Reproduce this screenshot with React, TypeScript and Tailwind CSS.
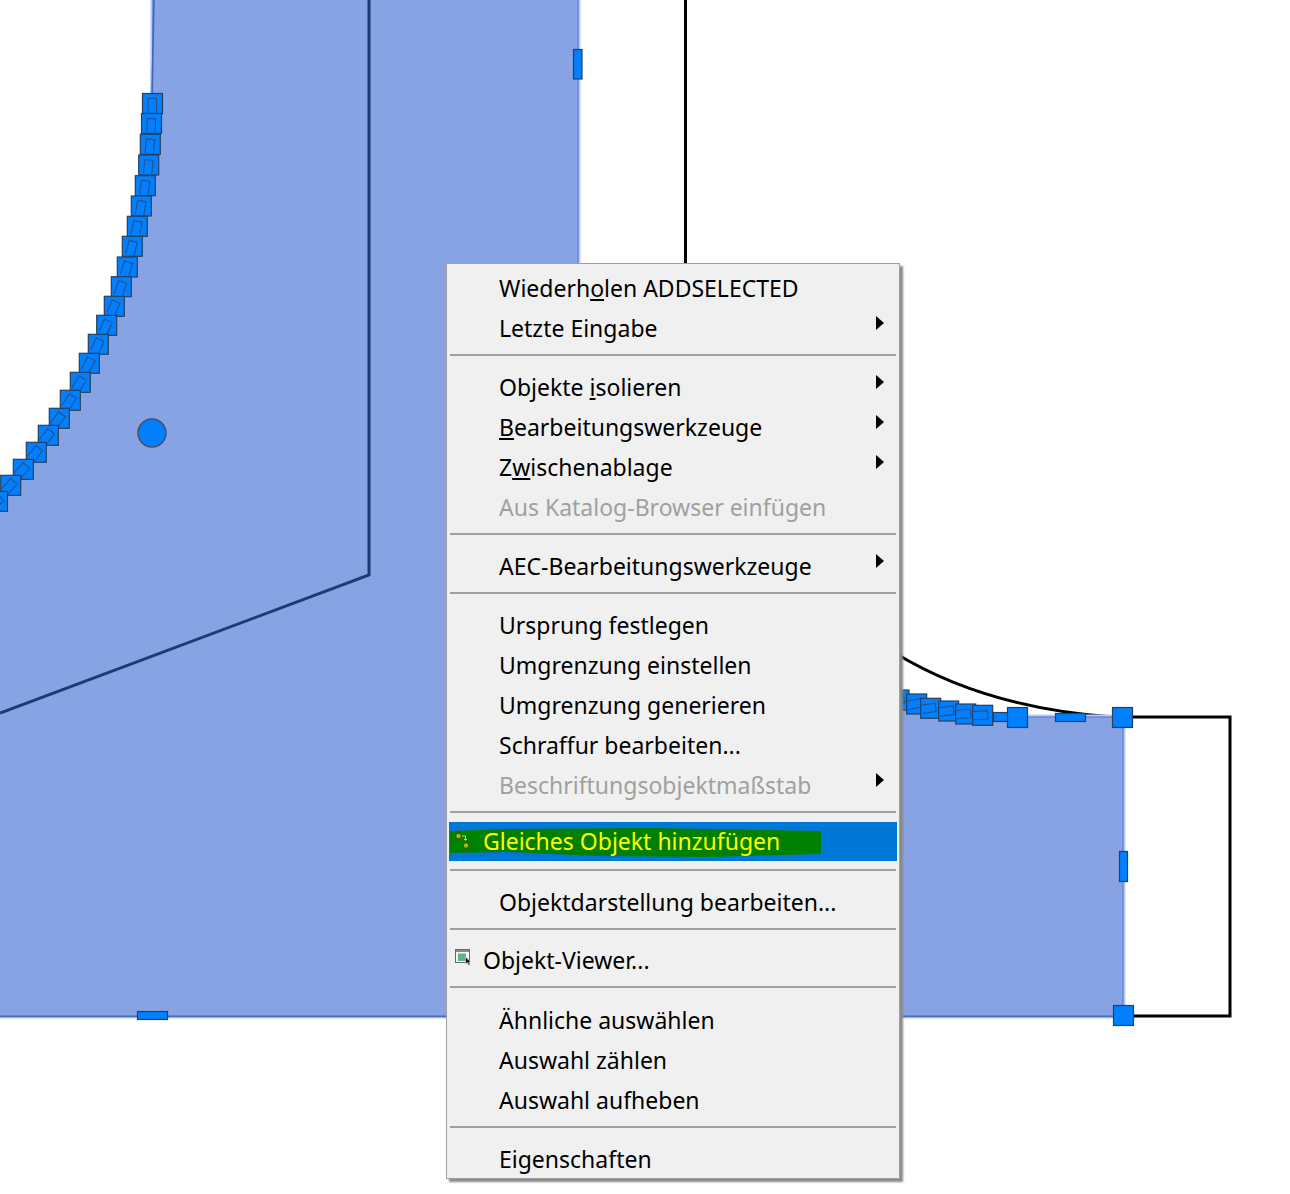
import React from 'react';

// handle centres along the arc, top to bottom
const arcLeft: [number, number][] = [
  [152.5, 103.5], [151.5, 123.5], [150.3, 144.3], [148.7, 165], [145.3, 185.7], [141.3, 206],
  [137.3, 226.3], [132.3, 246.3], [127.3, 267], [121.3, 286.7], [114.3, 306.3], [106.7, 325.3],
  [98.3, 344.3], [89.3, 363.3], [80.3, 382.3], [70.3, 400.3], [59.3, 418.3], [48.3, 435.3],
  [36.3, 452.3], [23.3, 469.3], [10.7, 485.3], [-2.5, 501.3],
];
const arcRight: [number, number, number][] = [
  [899, 700, 78], [916.7, 704, 80], [930.7, 708.3, 82], [948.7, 711, 83], [965.7, 714, 85], [982.7, 715.3, 87],
];

const Handle = ({ x, y, angle }: { x: number; y: number; angle: number }) => (
  <g transform={`translate(${x} ${y})`}>
    <rect x={-10} y={-10} width={20} height={20} fill="#0080ff" stroke="#27405f" strokeWidth={1.2} />
    <path
      d="M-4.5 9 L-4.5 -5 L4 -5 L4 9"
      transform={`rotate(${angle})`}
      fill="none"
      stroke="#27528f"
      strokeWidth={1.2}
    />
  </g>
);

const Drawing = () => {
  const leftPts = arcLeft.map(([x, y]) => `${x},${y}`).join(' L');
  const rightPts = arcRight.map(([x, y]) => `${x},${y}`).join(' L');
  const shape = `M153,-5 L578,-5 L578,690 L${rightPts} L1017,717 L1123,717 L1123,1016 L-5,1016 L${[...arcLeft]
    .reverse()
    .map(([x, y]) => `${x},${y}`)
    .join(' L')} Z`;
  void leftPts;

  return (
    <svg className="absolute inset-0" width={1290} height={1194} viewBox="0 0 1290 1194">
      {/* black outline */}
      <path d="M685.5 0 V270" fill="none" stroke="#000" strokeWidth={3} />
      <path d="M895 653 Q985 708 1113 717 H1230 V1016 H1120" fill="none" stroke="#000" strokeWidth={3} />

      {/* selected hatch */}
      <path d={shape} fill="#b9cbf5" stroke="#b9cbf5" strokeWidth={5} />
      <path d={shape} fill="#87a3e3" stroke="#6488de" strokeWidth={1.5} />
      <path d="M154 0 L152 94" stroke="#3f66c4" strokeWidth={1.5} fill="none" />
      <path d="M0 1016.5 H1113" stroke="#4c6cc0" strokeWidth={1.5} fill="none" />

      {/* inner boundary */}
      <path d="M369 0 V575 L0 713" fill="none" stroke="#1b3a78" strokeWidth={3} />

      {/* grips */}
      {arcLeft.map(([x, y], i) => (
        <Handle key={i} x={x} y={y} angle={(i / (arcLeft.length - 1)) * 45} />
      ))}
      {arcRight.map(([x, y, a], i) => (
        <Handle key={i} x={x} y={y} angle={a} />
      ))}
      <circle cx={152} cy={433} r={14} fill="#0080ff" stroke="#4a5068" strokeWidth={1.5} />
      <g fill="#0080ff" stroke="#27405f" strokeWidth={1.2}>
        <rect x={573.5} y={49.5} width={8.5} height={29.5} />
        <rect x={137.5} y={1011.5} width={30} height={8} />
        <rect x={1119.5} y={851.5} width={8} height={30} />
        <rect x={993.5} y={712.5} width={24} height={9} />
        <rect x={1007.5} y={707.5} width={20} height={20} />
        <rect x={1055.5} y={713.5} width={30} height={8} />
        <rect x={1112.5} y={707.5} width={20} height={20} />
        <rect x={1113.5} y={1005.5} width={20} height={20} />
      </g>
    </svg>
  );
};

const Arrow = () => <div className="absolute right-[15px] top-[8px] h-0 w-0 border-y-[7.5px] border-l-[8px] border-y-transparent border-l-black" />;

const Item = ({ children, sub, disabled }: { children: React.ReactNode; sub?: boolean; disabled?: boolean }) => (
  <div className={`relative flex h-10 items-center pl-[52px] ${disabled ? 'text-[#a0a0a0]' : 'text-black'}`}>
    <span>{children}</span>
    {sub && <Arrow />}
  </div>
);

const Sep = ({ className = 'mb-3' }: { className?: string }) => <div className={`mx-[3px] mt-[6px] h-0.5 bg-[#a0a0a0] ${className}`} />;

const ContextMenu = () => (
  <div className="absolute left-[446px] top-[263px] h-[916px] w-[454px] border border-[#a0a0a0] bg-[#f0f0f0] pt-[4px] text-[23px] leading-none shadow-[3px_3px_2px_#8a8a8a] [font-family:'Noto_Sans',sans-serif]">
    <Item>
      Wiederh<u>o</u>len ADDSELECTED
    </Item>
    <Item sub>Letzte Eingabe</Item>
    <Sep className="mb-[11px]" />
    <Item sub>
      Objekte <u>i</u>solieren
    </Item>
    <Item sub>
      <u>B</u>earbeitungswerkzeuge
    </Item>
    <Item sub>
      Z<u>w</u>ischenablage
    </Item>
    <Item disabled>Aus Katalog-Browser einfügen</Item>
    <Sep className="mb-[11px]" />
    <Item sub>AEC-Bearbeitungswerkzeuge</Item>
    <Sep className="mb-[11px]" />
    <Item>Ursprung festlegen</Item>
    <Item>Umgrenzung einstellen</Item>
    <Item>Umgrenzung generieren</Item>
    <Item>Schraffur bearbeiten...</Item>
    <Item disabled sub>
      Beschriftungsobjektmaßstab
    </Item>
    <Sep className="mb-[9px]" />

    {/* highlighted entry, marked over with a green marker */}
    <div className="relative mx-[2px] flex h-[39px] items-center bg-[#0078d7] pl-[34px] text-[#ffff00]">
      <svg className="absolute left-0 top-0" width={448} height={39} viewBox="0 0 448 39">
        <path d="M1 9 L60 7 L200 6 L372 9 L372 32 L260 35 L150 34 L60 30 L1 31 Z" fill="#008000" />
        <circle cx={9.5} cy={14} r={2.8} fill="#a6b800" stroke="#3b4a00" />
        <circle cx={17} cy={23.5} r={2.8} fill="#a6b800" stroke="#3b4a00" />
        <path d="M13 14 H16.5 V18 M15 17 L16.5 18.5 L18 17" fill="none" stroke="#e8e000" strokeWidth={1} />
      </svg>
      <span className="relative">Gleiches Objekt hinzufügen</span>
    </div>

    <Sep className="mb-[11px] mt-[8px]" />
    <Item>Objektdarstellung bearbeiten...</Item>
    <Sep className="mb-[10px]" />
    <div className="relative flex h-10 items-center pl-9 text-black">
      <svg className="absolute left-2 top-[9px]" width={18} height={18} viewBox="0 0 18 18">
        <rect x={0.5} y={0.5} width={14} height={13} fill="#f4f4f4" stroke="#6a6a6a" />
        <rect x={1} y={1} width={13} height={2} fill="#8a8a8a" />
        <rect x={3} y={4.5} width={8} height={7.5} fill="#55b98a" />
        <path d="M10.5 8 L10.5 15 L12.3 13.5 L13.8 16.5 L15 16 L13.7 13 L16 13 Z" fill="#111" stroke="#eee" strokeWidth={0.5} />
      </svg>
      <span>Objekt-Viewer...</span>
    </div>
    <Sep />
    <Item>Ähnliche auswählen</Item>
    <Item>Auswahl zählen</Item>
    <Item>Auswahl aufheben</Item>
    <Sep className="mb-[11px]" />
    <Item>Eigenschaften</Item>
  </div>
);

const App: React.FC = () => {
  return (
    <div className="relative h-[1194px] w-[1290px] overflow-hidden bg-white">
      <Drawing />
      <ContextMenu />
    </div>
  );
};

export default App;
